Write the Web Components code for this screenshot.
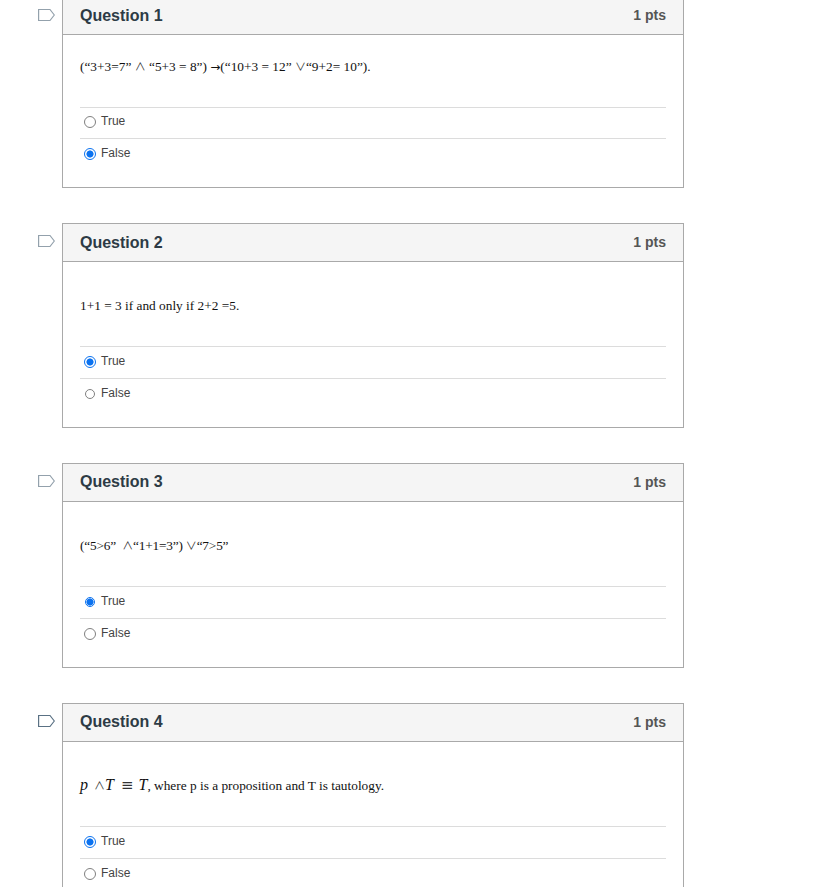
<!DOCTYPE html>
<html>
<head>
<meta charset="utf-8">
<title>Quiz</title>
<style>
    html, body { margin: 0; height: 887px; overflow: hidden; background: #fff; }
    body { font-family: "Liberation Sans", Arial, sans-serif; }
    .sym { font-family: "Noto Sans CJK SC", "DejaVu Sans", sans-serif; font-size: 11px; line-height: 0; color: #333; }
    .arrow { font-family: "DejaVu Sans", sans-serif; font-size: 12px; line-height: 0; }
    .math { font-size: 16px; font-style: italic; font-family: "Liberation Serif", serif; line-height: 0; }
    .math + .sym { margin-left: 6px; }
    .eq { font-family: "DejaVu Sans", sans-serif; font-size: 15px; line-height: 0; margin: 0 5px 0 7px; color: #333; }
    .tight { letter-spacing: -0.2px; }
</style>
</head>
<body>
<quiz-page>
    <quiz-question number="1" lead="23" flag-top="12">
        <span>(“3+3=7” <span class="sym">∧</span> “5+3 = 8”) <span class="arrow">→</span>(“10+3 = 12” <span class="sym">∨</span>“9+2= 10”).</span>
        <quiz-option slot="answers" label="True" row="31"></quiz-option>
        <quiz-option slot="answers" label="False" checked></quiz-option>
    </quiz-question>
    <quiz-question number="2">
        <span>1+1 = 3 if and only if 2+2 =5.</span>
        <quiz-option slot="answers" label="True" checked></quiz-option>
        <quiz-option slot="answers" label="False" size="10"></quiz-option>
    </quiz-question>
    <quiz-question number="3" title-up>
        <span class="tight">(“5&gt;6”&nbsp; <span class="sym">∧</span>“1+1=3”) <span class="sym">∨</span>“7&gt;5”</span>
        <quiz-option slot="answers" label="True" checked size="10"></quiz-option>
        <quiz-option slot="answers" label="False"></quiz-option>
    </quiz-question>
    <quiz-question number="4" lead="35" trail="31" title-up flagged>
        <span><span class="math">p</span><span class="sym">∧</span><span class="math">T</span><span class="eq">≡</span><span class="math">T</span>, where p is a proposition and T is tautology.</span>
        <quiz-option slot="answers" label="True" checked></quiz-option>
        <quiz-option slot="answers" label="False"></quiz-option>
    </quiz-question>
</quiz-page>

<script>
class QuizPage extends HTMLElement {
    constructor() {
        super();
        this.attachShadow({ mode: 'open' });
        this.shadowRoot.innerHTML = `
            <style>
            :host {
                display: flex;
                flex-direction: column;
                gap: 35px;
                margin-top: -4px; /* page is scrolled a little in the shot */
                padding-left: 38px;
            }
            </style>
            <slot></slot>
        `;
    }
}

class QuizQuestion extends HTMLElement {
    constructor() {
        super();
        this.attachShadow({ mode: 'open' });
    }

    connectedCallback() {
        const number = this.getAttribute('number') || '';
        const lead = this.getAttribute('lead') || '35';
        const trail = this.getAttribute('trail') || '31';
        const flagTop = this.getAttribute('flag-top') || '11';
        const titleUp = this.hasAttribute('title-up') ? '-2px' : '0';
        const stroke = this.hasAttribute('flagged') ? '#5a7184' : '#93a1ac';

        this.shadowRoot.innerHTML = `
            <style>
            :host {
                display: flex;
                align-items: flex-start;
                gap: 7px;
            }
            .flag {
                flex: none;
                width: 17px;
                height: 14px;
                margin-top: ${flagTop}px;
            }
            .card {
                width: 620px;
                border: 1px solid #a9a9a9;
                background: #fff;
            }
            .head {
                display: flex;
                justify-content: space-between;
                align-items: center;
                height: 37px;
                padding: 0 17px;
                background: #f5f5f5;
                border-bottom: 1px solid #a9a9a9;
            }
            .title {
                font-size: 16px;
                font-weight: bold;
                color: #2d3b45;
                margin-top: ${titleUp};
            }
            .pts {
                font-size: 14px;
                font-weight: bold;
                color: #555;
                margin-top: -2px;
            }
            .body {
                padding: ${lead}px 17px 17px;
            }
            .text {
                height: 18px;
                line-height: 18px;
                margin-bottom: ${trail}px;
                font-family: "Liberation Serif", "Times New Roman", serif;
                font-size: 13.33px;
                color: #111;
                white-space: nowrap;
            }
            </style>
            <svg class="flag" viewBox="0 0 17 14">
                <path d="M0.6 1.5 H12 L16.3 7 L12 12.5 H0.6 Z" fill="#fff" stroke="${stroke}" stroke-width="1.2"/>
            </svg>
            <div class="card">
                <div class="head">
                    <span class="title">Question ${number}</span>
                    <span class="pts">1 pts</span>
                </div>
                <div class="body">
                    <div class="text"><slot></slot></div>
                    <slot name="answers"></slot>
                </div>
            </div>
        `;
    }
}

class QuizOption extends HTMLElement {
    constructor() {
        super();
        this.attachShadow({ mode: 'open' });
    }

    connectedCallback() {
        const label = this.getAttribute('label') || '';
        const size = this.getAttribute('size') || '12';
        const row = this.getAttribute('row') || '32';
        const checked = this.hasAttribute('checked');

        this.shadowRoot.innerHTML = `
            <style>
            :host {
                display: flex;
                align-items: center;
                box-sizing: border-box;
                height: ${row}px;
                border-top: 1px solid #dcdcdc;
            }
            .slot {
                flex: none;
                display: flex;
                justify-content: center;
                width: 19px;
                margin-right: 2px;
                margin-top: -2px;
            }
            .radio {
                box-sizing: border-box;
                width: ${size}px;
                height: ${size}px;
                border-radius: 50%;
                background: #fff;
                border: 1px solid #808080;
            }
            .radio.on {
                border: 1px solid #0b72f0;
                background: radial-gradient(circle, #0b72f0 0 3.2px, #fff 3.9px);
            }
            .label {
                font-size: 12px;
                color: #444;
                margin-top: -4px;
            }
            </style>
            <span class="slot"><span class="radio ${checked ? 'on' : ''}"></span></span>
            <span class="label">${label}</span>
        `;
    }
}

customElements.define('quiz-page', QuizPage);
customElements.define('quiz-question', QuizQuestion);
customElements.define('quiz-option', QuizOption);
</script>
</body>
</html>
